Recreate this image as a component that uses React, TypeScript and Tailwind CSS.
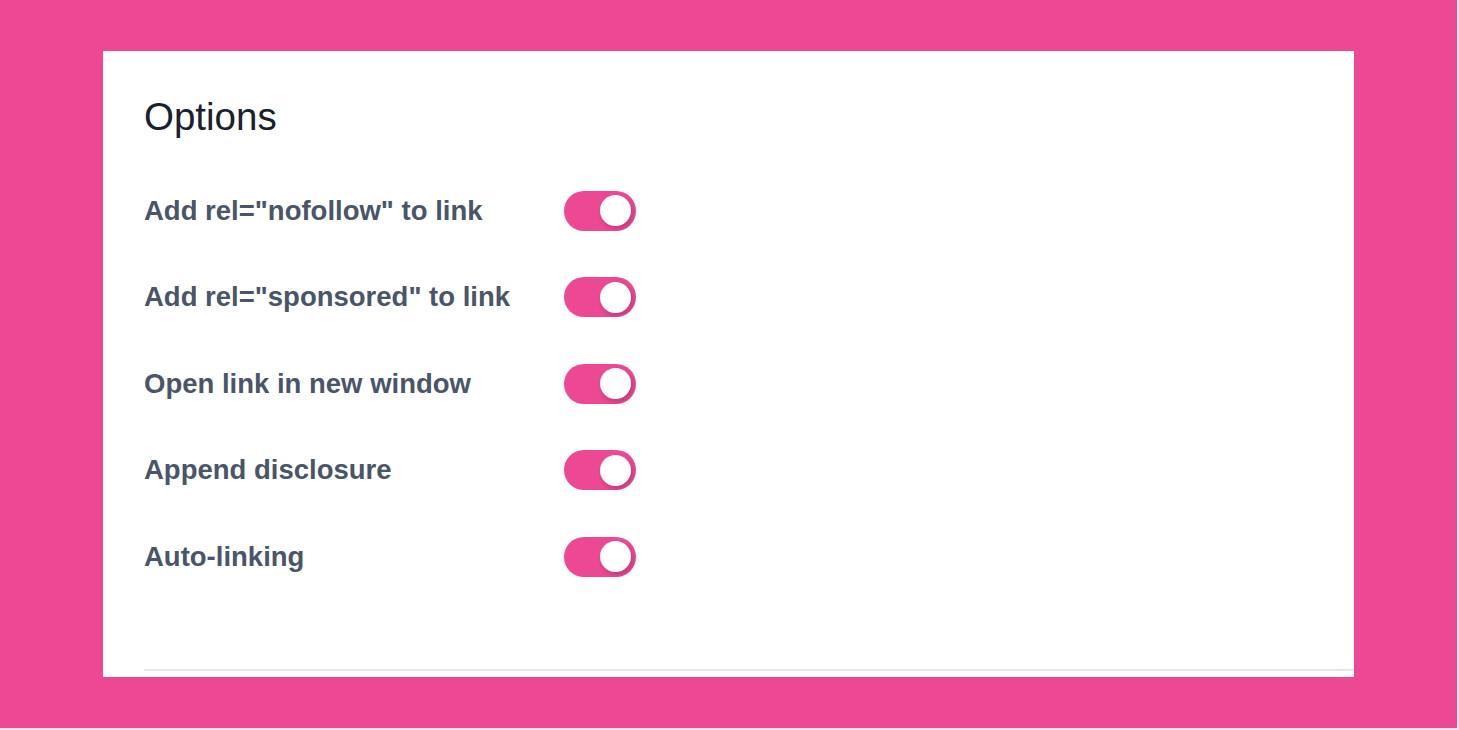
import React from "react";

function Toggle() {
  return (
    <div className="flex h-[40px] w-[72px] items-center justify-end rounded-full bg-[#ec4893] pr-[5px]">
      <div className="h-[31px] w-[31px] rounded-full bg-white shadow-[2px_3px_5px_rgba(0,0,0,0.18)]" />
    </div>
  );
}

export default function App() {
  const options = [
    'Add rel="nofollow" to link',
    'Add rel="sponsored" to link',
    "Open link in new window",
    "Append disclosure",
    "Auto-linking",
  ];

  return (
    <div className="h-[730px] w-[1459px] bg-[#fbe3ee] font-['Liberation_Sans',Arial,sans-serif]">
      <div className="h-[728px] w-[1457px] bg-[#ec4893] pl-[103px] pt-[51px]">
        <div className="flex h-[626px] w-[1251px] flex-col bg-white pl-[41px] pt-[47px]">
          <h1 className="text-[38.5px] leading-none font-normal text-[#1a202c]">Options</h1>
          <div className="mt-[54px] flex flex-col gap-[46.5px]">
            {options.map((label, i) => (
              <div key={i} className="flex h-[40px] items-center">
                <span className="w-[420px] text-[27.5px] font-bold text-[#4a5568]">{label}</span>
                <Toggle />
              </div>
            ))}
          </div>
          <div className="mt-auto mb-[6px] h-[2px] bg-[#e6e6ea]" />
        </div>
      </div>
    </div>
  );
}
